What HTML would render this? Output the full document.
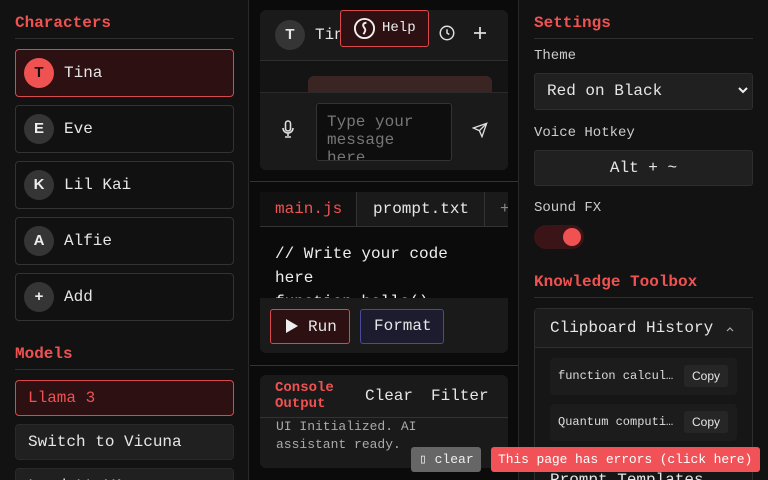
<!DOCTYPE html>
<html><head><style>
*{box-sizing:border-box;margin:0;padding:0}
body{width:768px;height:480px;overflow:hidden;background:#0b0b0b;font-family:"Liberation Mono",monospace;color:#e6e6e6;position:relative}
.abs{position:absolute}
.left{left:0;top:0;width:249px;height:480px;background:#121212;border-right:1px solid #2a2a2a;overflow:hidden}
.right{left:518px;top:0;width:250px;height:480px;background:#121212;border-left:1px solid #2a2a2a;overflow:hidden}
h2{font-size:16px;color:#f05252;font-weight:bold;position:absolute;left:15px}
.hr{position:absolute;height:1px;background:#2e2e2e}
.item{position:absolute;left:15px;width:219px;height:48px;border:1px solid #333;border-radius:4px;background:#111;font-size:16px}
.item .av{position:absolute;left:8px;top:8px;width:30px;height:30px;border-radius:50%;background:#353535;color:#eee;font-family:"Liberation Sans",sans-serif;font-weight:bold;font-size:15px;text-align:center;line-height:30px}
.item .n{position:absolute;left:48px;top:14px}
.model{position:absolute;left:15px;width:219px;height:36px;border-radius:4px;background:#202020;border:1px solid #2a2a2a;font-size:16px;padding:8px 12px}
.card{position:absolute;background:#1a1a1a;border-radius:6px}
.lab{position:absolute;left:15px;font-size:14px;color:#ccc}
</style></head><body>
<div class="abs left">
<h2 style="top:14px">Characters</h2>
<div class="hr" style="left:15px;top:38px;width:219px"></div>
<div class="item" style="top:49px;background:#2c1012;border-color:#d9484c"><div class="av" style="background:#f05252;color:#111">T</div><div class="n">Tina</div></div>
<div class="item" style="top:105px"><div class="av">E</div><div class="n">Eve</div></div>
<div class="item" style="top:161px"><div class="av">K</div><div class="n">Lil Kai</div></div>
<div class="item" style="top:217px"><div class="av">A</div><div class="n">Alfie</div></div>
<div class="item" style="top:273px"><div class="av">+</div><div class="n">Add</div></div>
<h2 style="top:345px">Models</h2>
<div class="hr" style="left:15px;top:369px;width:219px"></div>
<div class="model" style="top:380px;background:#2c1012;border-color:#d9484c;color:#f05252">Llama 3</div>
<div class="model" style="top:424px">Switch to Vicuna</div>
<div class="model" style="top:468px">Load LLaVA</div>
</div>

<div class="card" style="left:260px;top:10px;width:248px;height:160px;overflow:hidden">
<div class="abs" style="left:15px;top:10px;width:30px;height:30px;border-radius:50%;background:#353535;font-family:'Liberation Sans',sans-serif;font-weight:bold;text-align:center;line-height:30px;font-size:15px">T</div>
<div class="abs" style="left:55px;top:16px;font-size:16px">Tina</div>
<svg class="abs" style="left:178px;top:14px" width="18" height="18" viewBox="0 0 24 24" fill="none" stroke="#ddd" stroke-width="2"><circle cx="12" cy="12" r="9"/><path d="M12 7v5l3 2"/></svg>
<svg class="abs" style="left:212px;top:15px" width="16" height="16" viewBox="0 0 16 16" stroke="#ddd" stroke-width="1.8"><path d="M8 2v12M2 8h12"/></svg>
<div class="hr" style="left:0;top:50px;width:248px;background:#2e2e2e"></div>
<div class="abs" style="left:0;top:51px;width:248px;height:31px;background:#141414"></div>
<div class="abs" style="left:48px;top:66px;width:184px;height:20px;background:#3a2424;border-radius:6px"></div>
<div class="abs" style="left:0;top:82px;width:248px;height:78px;background:#1a1a1a;border-top:1px solid #2a2a2a"></div>
<svg class="abs" style="left:20px;top:110px" width="16" height="18" viewBox="0 0 16 18" fill="none" stroke="#ddd" stroke-width="1.6"><rect x="5.5" y="1" width="5" height="10" rx="2.5"/><path d="M3 8a5 5 0 0 0 10 0M8 13v3M5 17h6"/></svg>
<div class="abs" style="left:56px;top:93px;width:136px;height:58px;background:#0e0e0e;border:1px solid #333;border-radius:3px;overflow:hidden;color:#777;font-size:16px;line-height:18px;padding:9px 10px">Type your message here</div>
<svg class="abs" style="left:212px;top:112px" width="16" height="16" viewBox="0 0 24 24" fill="none" stroke="#ddd" stroke-width="2"><path d="M22 2L11 13M22 2l-7 20-4-9-9-4z"/></svg>
</div>
<div class="abs" style="left:340px;top:10px;width:89px;height:37px;background:#2c1012;border:1px solid #d9484c;border-radius:3px"></div>
<svg class="abs" style="left:353px;top:17px" width="23" height="23" viewBox="0 0 24 24" fill="none" stroke="#eee" stroke-width="2"><circle cx="12" cy="12" r="10"/><path d="M14 6c-3 0-4 2-3 4s3 3 1 6l-1 2"/></svg>
<div class="abs" style="left:382px;top:20px;font-size:14px;color:#eee">Help</div>

<div class="hr" style="left:250px;top:181px;width:268px;background:#333"></div>
<div class="abs" style="left:260px;top:192px;width:248px;height:35px;background:#1a1a1a;overflow:hidden;border-bottom:1px solid #333">
<div class="abs" style="left:0;top:0;width:97px;height:35px;background:#111;border-right:1px solid #333"></div>
<div class="abs" style="left:15px;top:8px;color:#f05252;font-size:16px">main.js</div>
<div class="abs" style="left:113px;top:8px;font-size:16px">prompt.txt</div>
<div class="abs" style="left:224px;top:0;width:1px;height:35px;background:#333"></div>
<div class="abs" style="left:240px;top:8px;font-size:16px;color:#888">+</div>
</div>
<div class="abs" style="left:275px;top:242px;width:220px;height:56px;overflow:hidden;font-size:16px;line-height:24px;color:#eee">// Write your code here<br>function hello()</div>
<div class="card" style="left:260px;top:298px;width:248px;height:55px;border-radius:0 0 6px 6px">
<div class="abs" style="left:10px;top:11px;width:80px;height:35px;background:#2c1012;border:1px solid #d9484c;border-radius:3px"></div>
<svg class="abs" style="left:26px;top:21px" width="12" height="14"><path d="M0 0L12 7L0 14z" fill="#eee"/></svg>
<div class="abs" style="left:48px;top:20px;font-size:16px">Run</div>
<div class="abs" style="left:100px;top:11px;width:84px;height:35px;background:#1c1c2e;border:1px solid #4a4a9a;border-radius:3px;font-size:16px;padding:7px 13px">Format</div>
</div>
<div class="hr" style="left:250px;top:365px;width:268px;background:#333"></div>
<div class="card" style="left:260px;top:375px;width:248px;height:93px;overflow:hidden">
<div class="abs" style="left:15px;top:5px;color:#f05252;font-weight:bold;font-size:14px;line-height:16px">Console<br>Output</div>
<div class="abs" style="left:105px;top:12px;font-size:16px">Clear</div>
<div class="abs" style="left:171px;top:12px;font-size:16px">Filter</div>
<div class="hr" style="left:0;top:42px;width:248px;background:#333"></div>
<div class="abs" style="left:16px;top:43px;font-size:13px;line-height:18px;color:#aaa">UI Initialized. AI<br>assistant ready.</div>
</div>

<div class="abs right">
<h2 style="top:14px">Settings</h2>
<div class="hr" style="left:15px;top:38px;width:219px"></div>
<div class="lab" style="top:48px">Theme</div>
<div class="abs" style="left:15px;top:73px;width:219px;height:37px;background:#202020;border:1px solid #2e2e2e;border-radius:3px;font-size:16px;padding:8px 12px">Red on Black</div>
<svg class="abs" style="left:219px;top:87px" width="10" height="8"><path d="M1 1l4 4 4-4" stroke="#eee" stroke-width="2" fill="none"/></svg>
<div class="lab" style="top:125px">Voice Hotkey</div>
<div class="abs" style="left:15px;top:150px;width:219px;height:36px;background:#202020;border:1px solid #2e2e2e;border-radius:3px;font-size:16px;text-align:center;padding-top:8px">Alt + ~</div>
<div class="lab" style="top:200px">Sound FX</div>
<div class="abs" style="left:15px;top:225px;width:50px;height:24px;background:#3a1416;border-radius:12px"></div>
<div class="abs" style="left:44px;top:228px;width:18px;height:18px;background:#f05252;border-radius:50%"></div>
<h2 style="top:273px">Knowledge Toolbox</h2>
<div class="hr" style="left:15px;top:297px;width:219px"></div>
<div class="abs" style="left:15px;top:308px;width:219px;height:180px;background:#161616;border:1px solid #2e2e2e;border-radius:4px">
<div class="abs" style="left:0;top:0;width:217px;height:39px;background:#1c1c1c;border-bottom:1px solid #2e2e2e"></div>
<div class="abs" style="left:15px;top:10px;font-size:16px">Clipboard History</div>
<svg class="abs" style="left:191px;top:17px" width="8" height="6"><path d="M1 5l3-3 3 3" stroke="#aaa" stroke-width="1.2" fill="none"/></svg>
<div class="abs" style="left:15px;top:49px;width:187px;height:37px;background:#1c1c1c;border-radius:4px"></div>
<div class="abs" style="left:23px;top:60px;font-size:12px;color:#ddd">function calcul…</div>
<div class="abs" style="left:149px;top:56px;width:44px;height:22px;background:#262626;border-radius:3px;font-family:'Liberation Sans',sans-serif;font-size:12px;text-align:center;line-height:22px">Copy</div>
<div class="abs" style="left:15px;top:95px;width:187px;height:37px;background:#1c1c1c;border-radius:4px"></div>
<div class="abs" style="left:23px;top:106px;font-size:12px;color:#ddd">Quantum computi…</div>
<div class="abs" style="left:149px;top:102px;width:44px;height:22px;background:#262626;border-radius:3px;font-family:'Liberation Sans',sans-serif;font-size:12px;text-align:center;line-height:22px">Copy</div>
<div class="abs" style="left:15px;top:162px;font-size:16px">Prompt Templates</div>
</div>
</div>

<div class="abs" style="left:411px;top:447px;width:70px;height:25px;background:#666;border-radius:3px;font-size:13px;color:#eee;padding:5px 8px;white-space:nowrap">▯ clear</div>
<div class="abs" style="left:491px;top:447px;width:269px;height:25px;background:#f05258;border-radius:3px;font-size:13px;color:#fff;padding:5px 0 0 7px;white-space:nowrap;letter-spacing:-0.1px">This page has errors (click here)</div>
</body></html>
